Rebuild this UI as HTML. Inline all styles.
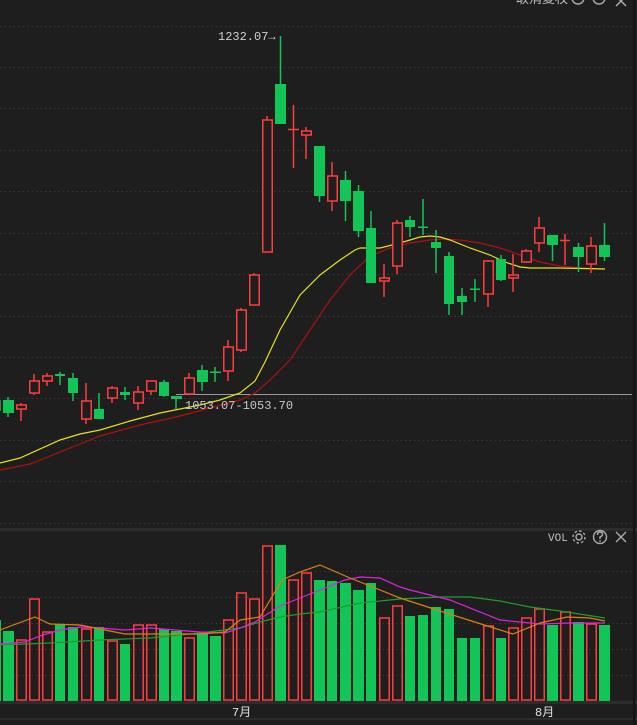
<!DOCTYPE html>
<html><head><meta charset="utf-8"><style>
html,body{margin:0;padding:0;background:#1e1e1f;width:637px;height:725px;overflow:hidden}
svg{display:block}
text{font-family:"Liberation Mono","Noto Sans CJK SC",monospace}
</style></head><body>
<svg width="637" height="725" viewBox="0 0 637 725" xmlns="http://www.w3.org/2000/svg">
<rect width="637" height="725" fill="#1e1e1f"/>
<!-- grid price -->
<g stroke="#3a3a3a" stroke-dasharray="1.5,3" stroke-width="1">
<line x1="0" y1="26.5" x2="632" y2="26.5"/><line x1="0" y1="67.5" x2="632" y2="67.5"/>
<line x1="0" y1="108.5" x2="632" y2="108.5"/><line x1="0" y1="150.5" x2="632" y2="150.5"/>
<line x1="0" y1="191.5" x2="632" y2="191.5"/><line x1="0" y1="233.5" x2="632" y2="233.5"/>
<line x1="0" y1="274.5" x2="632" y2="274.5"/><line x1="0" y1="316.5" x2="632" y2="316.5"/>
<line x1="0" y1="357.5" x2="632" y2="357.5"/><line x1="0" y1="398.5" x2="632" y2="398.5"/>
<line x1="0" y1="440.5" x2="632" y2="440.5"/><line x1="0" y1="481.5" x2="632" y2="481.5"/>
<line x1="0" y1="523.5" x2="632" y2="523.5"/>
<line x1="0" y1="571.5" x2="632" y2="571.5"/><line x1="0" y1="597.5" x2="632" y2="597.5"/>
<line x1="0" y1="623.5" x2="632" y2="623.5"/><line x1="0" y1="649.5" x2="632" y2="649.5"/>
<line x1="0" y1="675.5" x2="632" y2="675.5"/>
</g>
<!-- panel borders -->
<rect x="0" y="528" width="637" height="3" fill="#2c2c2d"/>
<rect x="0" y="701" width="637" height="3" fill="#2c2c2d"/>
<rect x="0" y="718" width="637" height="2" fill="#2c2c2d"/>
<rect x="633" y="0" width="2" height="725" fill="#141414"/>
<line x1="176" y1="394.5" x2="632" y2="394.5" stroke="#9a9a9a" stroke-width="1"/>

<!-- MA lines -->
<polyline fill="none" stroke="#b00f0f" stroke-width="1.2" points="0,470 30,464 60,452 100,436 140,425 180,416 210,408 240,400 255,393 270,380 290,360 310,330 330,300 350,275 370,256 390,248 410,243 430,240 445,239 460,240 480,243 500,248 520,255 540,262 560,266 580,268 605,269"/>
<polyline fill="none" stroke="#e6e020" stroke-width="1.2" points="0,463 20,458 60,440 80,434 100,430 130,421 160,413 175,410 200,405 220,400 240,393 255,381 265,362 280,330 300,295 320,275 340,260 355,250 360,248 380,248 400,243 420,237 430,236 440,237 450,240 470,248 490,255 505,262 520,267 530,268 560,268 605,269"/>

<!-- candles -->
<g stroke-width="1.5">
<g stroke="#13c457" fill="#13c457">
<line x1="-5" y1="398" x2="-5" y2="412"/><rect x="-10" y="401" width="10" height="9"/>
<line x1="8" y1="397" x2="8" y2="417"/><rect x="3" y="400" width="11" height="13" stroke="none"/>
<line x1="60" y1="372" x2="60" y2="385"/><rect x="55" y="374" width="10" height="2" stroke="none"/>
<line x1="73" y1="373" x2="73" y2="401"/><rect x="68" y="378" width="10" height="15" stroke="none"/>
<line x1="99" y1="393" x2="99" y2="419"/><rect x="94" y="409" width="10" height="10" stroke="none"/>
<line x1="125" y1="387" x2="125" y2="400"/><rect x="120" y="392" width="10" height="3" stroke="none"/>
<line x1="164" y1="380" x2="164" y2="397"/><rect x="159" y="382" width="10" height="14" stroke="none"/>
<line x1="176" y1="396" x2="176" y2="409"/><rect x="171" y="396" width="11" height="3" stroke="none"/>
<line x1="202" y1="365" x2="202" y2="391"/><rect x="197" y="370" width="11" height="12" stroke="none"/>
<line x1="215" y1="367" x2="215" y2="382"/><rect x="210" y="371.5" width="11" height="1.5" stroke="none"/>
<line x1="280.5" y1="36" x2="280.5" y2="124"/><rect x="275" y="84" width="11" height="40" stroke="none"/>
<line x1="319.5" y1="146" x2="319.5" y2="202"/><rect x="314" y="146" width="11" height="50" stroke="none"/>
<line x1="345.5" y1="171" x2="345.5" y2="221"/><rect x="340" y="180" width="11" height="21" stroke="none"/>
<line x1="358.5" y1="185" x2="358.5" y2="237"/><rect x="353" y="191" width="11" height="40" stroke="none"/>
<line x1="371" y1="211" x2="371" y2="283"/><rect x="366" y="228" width="10" height="55" stroke="none"/>
<line x1="410" y1="216" x2="410" y2="237"/><rect x="405" y="220" width="10" height="7" stroke="none"/>
<line x1="423" y1="199" x2="423" y2="235"/><rect x="418" y="226.5" width="10" height="1.5" stroke="none"/>
<line x1="436" y1="230" x2="436" y2="273"/><rect x="431" y="242" width="10" height="6" stroke="none"/>
<line x1="449" y1="252" x2="449" y2="315"/><rect x="444" y="256" width="10" height="48" stroke="none"/>
<line x1="462" y1="288" x2="462" y2="315"/><rect x="457" y="296" width="10" height="6" stroke="none"/>
<line x1="475" y1="279" x2="475" y2="302"/><rect x="470" y="288.5" width="10" height="1.5" stroke="none"/>
<line x1="501" y1="255" x2="501" y2="281"/><rect x="496" y="259" width="10" height="21" stroke="none"/>
<line x1="552.5" y1="235" x2="552.5" y2="261"/><rect x="547" y="235" width="11" height="10" stroke="none"/>
<line x1="578.5" y1="243" x2="578.5" y2="272"/><rect x="573" y="247" width="11" height="10" stroke="none"/>
<line x1="604.5" y1="223" x2="604.5" y2="261"/><rect x="599" y="245" width="11" height="12" stroke="none"/>
</g>
<g stroke="#ff3d3d" fill="#1e1e1f">
<line x1="21" y1="403" x2="21" y2="421"/><rect x="16.75" y="405" width="9.5" height="4"/>
<line x1="34" y1="374" x2="34" y2="395"/><rect x="29.75" y="381" width="9.5" height="12"/>
<line x1="47" y1="373" x2="47" y2="386"/><rect x="42.75" y="376" width="9.5" height="5"/>
<line x1="86" y1="383" x2="86" y2="424"/><rect x="81.75" y="401" width="9.5" height="18"/>
<line x1="112" y1="386" x2="112" y2="403"/><rect x="107.75" y="388" width="9.5" height="10"/>
<line x1="138" y1="386" x2="138" y2="410"/><rect x="133.75" y="392" width="9.5" height="11"/>
<line x1="151" y1="381" x2="151" y2="395"/><rect x="146.75" y="381" width="9.5" height="10"/>
<line x1="189" y1="373" x2="189" y2="394"/><rect x="184.75" y="378" width="9.5" height="16"/>
<line x1="228" y1="340" x2="228" y2="381"/><rect x="223.75" y="347" width="9.5" height="24"/>
<line x1="241" y1="308" x2="241" y2="352"/><rect x="236.75" y="310" width="9.5" height="40"/>
<line x1="254" y1="273" x2="254" y2="305"/><rect x="249.75" y="275" width="9.5" height="30"/>
<line x1="267" y1="116" x2="267" y2="252"/><rect x="262.75" y="120" width="9.5" height="132"/>
<line x1="293.5" y1="105" x2="293.5" y2="168"/><line x1="288" y1="129.5" x2="299" y2="129.5"/>
<line x1="306" y1="127" x2="306" y2="159"/><rect x="301.75" y="131" width="9.5" height="4"/>
<line x1="332" y1="162" x2="332" y2="211"/><rect x="327.75" y="176" width="9.5" height="25"/>
<line x1="384" y1="264" x2="384" y2="297"/><rect x="379.75" y="278" width="9.5" height="3"/>
<line x1="397" y1="220" x2="397" y2="274"/><rect x="392.75" y="223" width="9.5" height="43"/>
<line x1="488" y1="260" x2="488" y2="307"/><rect x="483.75" y="261" width="9.5" height="33"/>
<line x1="513" y1="254" x2="513" y2="292"/><rect x="508.75" y="275" width="9.5" height="3"/>
<line x1="526" y1="249" x2="526" y2="263"/><rect x="521.75" y="251" width="9.5" height="11"/>
<line x1="539" y1="217" x2="539" y2="252"/><rect x="534.75" y="228" width="9.5" height="15"/>
<line x1="565" y1="234" x2="565" y2="265"/><line x1="560" y1="240.5" x2="570" y2="240.5"/>
<line x1="591" y1="237" x2="591" y2="273"/><rect x="586.75" y="246" width="9.5" height="18"/>
</g>
</g>

<text x="218" y="40" font-size="12" fill="#d0d0d0">1232.07→</text>
<text x="185" y="409" font-size="12" fill="#c8c8c8">1053.07-1053.70</text>
<text x="516" y="3" font-size="13" fill="#bbbbbb" font-family="Liberation Sans,Noto Sans CJK SC,sans-serif">取消复权</text>
<circle cx="578" cy="-2" r="6" fill="none" stroke="#aaa" stroke-width="1.5"/>
<circle cx="599" cy="-2" r="6" fill="none" stroke="#aaa" stroke-width="1.5"/>
<path d="M616 -4 L626 6 M626 -4 L616 6" stroke="#aaa" stroke-width="1.5"/>

<!-- volume bars -->
<g fill="#13c457">
<rect x="-10" y="620" width="11" height="81"/>
<rect x="3" y="631" width="11" height="70"/><rect x="55" y="624" width="10" height="77"/>
<rect x="68" y="627" width="10" height="74"/><rect x="94" y="627" width="10" height="74"/>
<rect x="120" y="644" width="10" height="57"/><rect x="159" y="629" width="10" height="72"/>
<rect x="171" y="631" width="11" height="70"/><rect x="197" y="633" width="11" height="68"/>
<rect x="210" y="636" width="11" height="65"/><rect x="275" y="545" width="11" height="156"/>
<rect x="314" y="580" width="11" height="121"/><rect x="327" y="581" width="10" height="120"/>
<rect x="340" y="583" width="11" height="118"/><rect x="353" y="590" width="11" height="111"/>
<rect x="366" y="583" width="10" height="118"/><rect x="405" y="616" width="10" height="85"/>
<rect x="418" y="615" width="10" height="86"/><rect x="431" y="607" width="10" height="94"/>
<rect x="444" y="609" width="10" height="92"/><rect x="457" y="638" width="10" height="63"/>
<rect x="470" y="638" width="10" height="63"/><rect x="496" y="638" width="10" height="63"/>
<rect x="547" y="625" width="11" height="76"/><rect x="573" y="622" width="11" height="79"/>
<rect x="599" y="625" width="11" height="76"/>
</g>
<g fill="none" stroke="#ff3d3d" stroke-width="1.5">
<rect x="16.75" y="640" width="9.5" height="60"/><rect x="29.75" y="599" width="9.5" height="101"/>
<rect x="42.75" y="632" width="9.5" height="68"/><rect x="81.75" y="629" width="9.5" height="71"/>
<rect x="107.75" y="641" width="9.5" height="59"/><rect x="133.75" y="625" width="9.5" height="75"/>
<rect x="146.75" y="625" width="9.5" height="75"/><rect x="184.75" y="638" width="9.5" height="62"/>
<rect x="223.75" y="620" width="9.5" height="80"/><rect x="236.75" y="593" width="9.5" height="107"/>
<rect x="249.75" y="599" width="9.5" height="101"/><rect x="262.75" y="546" width="9.5" height="154"/>
<rect x="288.75" y="580" width="9.5" height="120"/><rect x="301.75" y="573" width="9.5" height="127"/>
<rect x="379.75" y="618" width="9.5" height="82"/><rect x="392.75" y="606" width="9.5" height="94"/>
<rect x="483.75" y="626" width="9.5" height="74"/><rect x="508.75" y="628" width="9.5" height="72"/>
<rect x="521.75" y="618" width="9.5" height="82"/><rect x="534.75" y="609" width="9.5" height="91"/>
<rect x="560.75" y="612" width="9.5" height="88"/><rect x="586.75" y="624" width="9.5" height="76"/>
</g>
<!-- vol MAs -->
<polyline fill="none" stroke="#1a9e2a" stroke-width="1.2" points="0,645 50,643 100,640 150,638 200,633 240,628 260,622 280,617 300,614 320,612 360,603 400,599 420,598 440,597 470,597 500,601 530,607 560,611 605,618"/>
<polyline fill="none" stroke="#e020e0" stroke-width="1.2" points="0,644 25,642 40,636 60,630 80,627 100,628 125,630 150,628 200,632 225,633 240,628 255,622 280,606 300,598 320,590 345,580 360,577 380,578 400,587 410,590 450,600 500,620 540,624 570,623 605,623"/>
<polyline fill="none" stroke="#d88010" stroke-width="1.2" points="0,630 35,617 50,624 80,625 100,629 125,634 160,634 200,634 225,632 240,620 260,617 282,580 300,572 320,565 350,578 380,590 400,598 440,611 481,624 513,634 540,623 567,617 590,618 605,621"/>

<text x="548" y="541" font-size="11" fill="#c0c0c0">VOL</text>
<g fill="none" stroke="#aaa" stroke-width="1.4">
<circle cx="579" cy="537" r="3"/>
<circle cx="579" cy="537" r="6" stroke-dasharray="2.5,2.2"/>
<circle cx="600" cy="537" r="6.5"/>
<path d="M597.5 535 Q597.5 532 600 532 Q602.5 532 602.5 534.5 Q602.5 536 600 537 L600 539"/>
<path d="M616 532 L626 542 M626 532 L616 542"/>
</g>
<circle cx="600" cy="541" r="0.9" fill="#aaa"/>
<text x="232" y="716" font-size="12" fill="#e0e0e0">7月</text>
<text x="535" y="716" font-size="12" fill="#e0e0e0">8月</text>
</svg>
</body></html>
